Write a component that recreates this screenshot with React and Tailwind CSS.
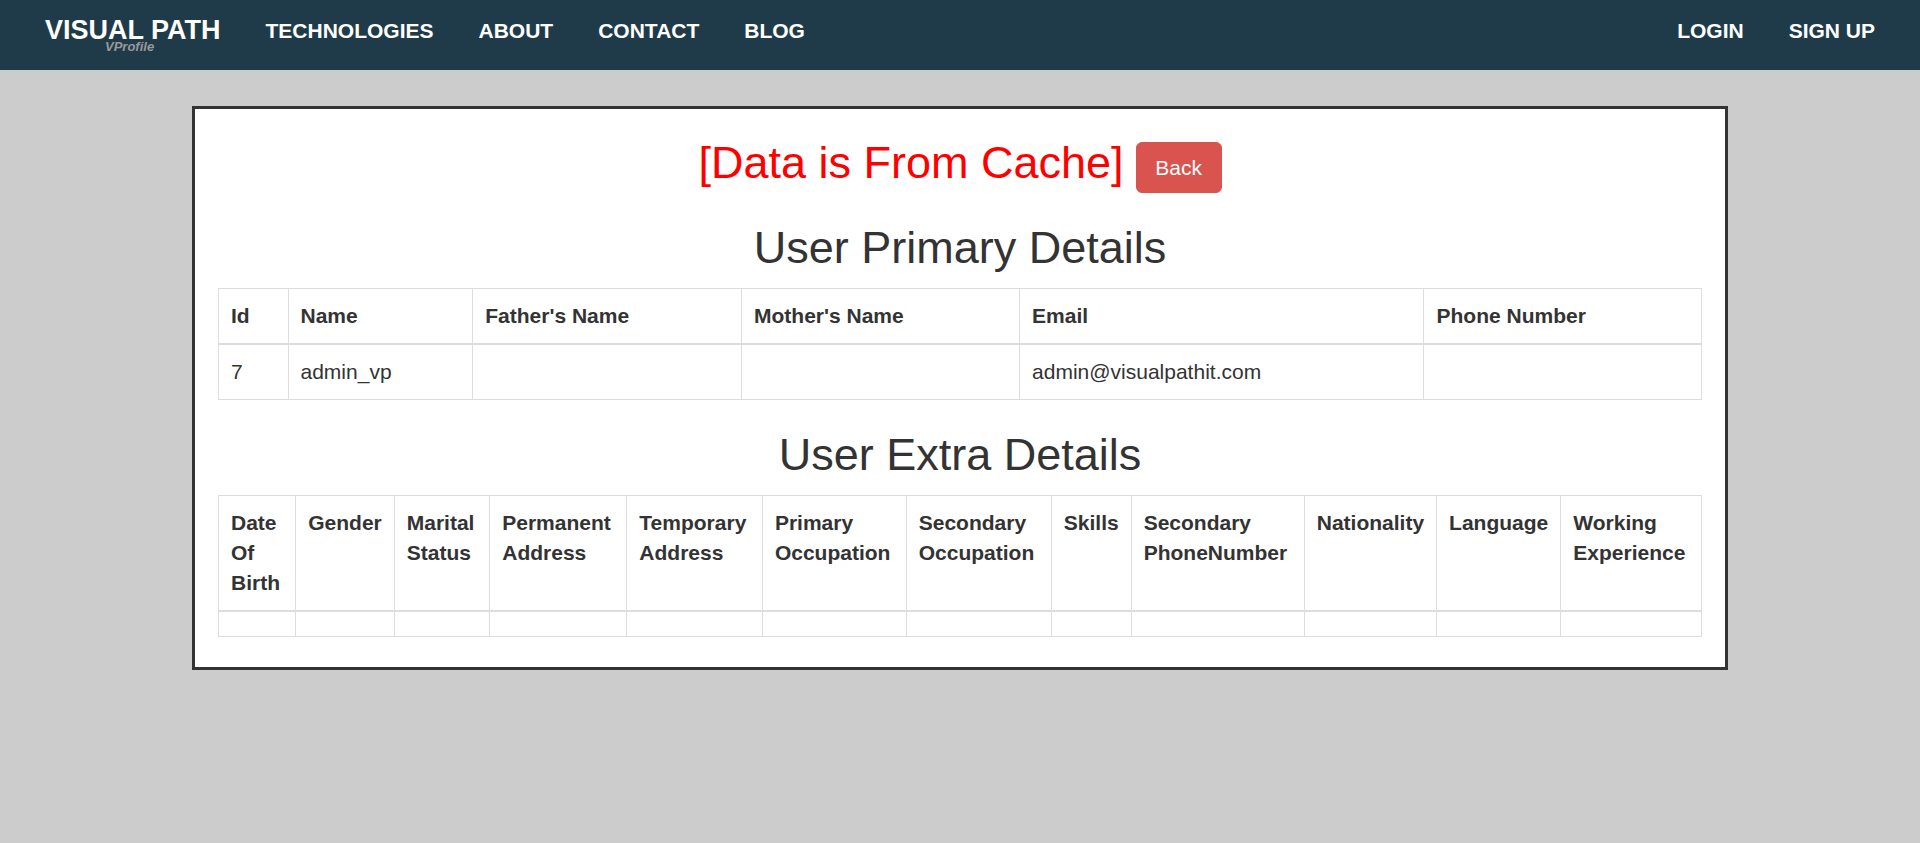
const primaryHead = ['Id', 'Name', "Father's Name", "Mother's Name", 'Email', 'Phone Number']
const primaryRow = ['7', 'admin_vp', '', '', 'admin@visualpathit.com', '']
const extraHead = [
  'Date Of Birth', 'Gender', 'Marital Status', 'Permanent Address', 'Temporary Address', 'Primary Occupation',
  'Secondary Occupation', 'Skills', 'Secondary PhoneNumber', 'Nationality', 'Language', 'Working Experience',
]

function DetailsTable({ head, row }) {
  return (
    <table className="w-full border-collapse border border-[#ddd] text-[21px] leading-[30px]">
      <thead>
        <tr>
          {head.map((h) => (
            <th key={h} className="border border-b-2 border-[#ddd] p-3 text-left align-top font-bold">{h}</th>
          ))}
        </tr>
      </thead>
      <tbody>
        <tr>
          {row.map((c, i) => (
            <td key={i} className="h-[25px] border border-[#ddd] p-3 align-top">{c}</td>
          ))}
        </tr>
      </tbody>
    </table>
  )
}

export default function App() {
  return (
    <div className="min-h-[843px] bg-[#ccc] font-['Liberation_Sans',Arial,sans-serif] text-[#333]">
      <nav className="flex h-[70px] items-center justify-between bg-[#1f3b49] px-[45px] pb-[9px] text-[21px] font-bold text-white">
        <div className="flex items-center gap-[45px]">
          <a className="relative text-[27px] leading-none">
            VISUAL PATH
            <span className="absolute left-[60px] top-[23px] text-[13px] italic text-[#999]">VProfile</span>
          </a>
          <a>TECHNOLOGIES</a>
          <a>ABOUT</a>
          <a>CONTACT</a>
          <a>BLOG</a>
        </div>
        <div className="flex items-center gap-[45px]">
          <a>LOGIN</a>
          <a>SIGN UP</a>
        </div>
      </nav>

      <div className="px-[192px] pt-9">
        <div className="border-[3px] border-[#333] bg-white px-[23px] pb-[30px]">
          <div className="flex items-start justify-center gap-3 pt-[29px] text-[45px] leading-[1.1] text-[#f00]">
            <span>[Data is From Cache]</span>
            <button className="mt-[4px] h-[51px] w-[86px] rounded-md border border-[#d9534f] bg-[#d9534f] text-[21px] text-white">Back</button>
          </div>
          <h2 className="mt-[30px] mb-[15px] text-center text-[45px] font-normal leading-[1.1]">User Primary Details</h2>
          <DetailsTable head={primaryHead} row={primaryRow} />
          <h2 className="mt-[30px] mb-[16px] text-center text-[45px] font-normal leading-[1.1]">User Extra Details</h2>
          <DetailsTable head={extraHead} row={extraHead.map(() => '')} />
        </div>
      </div>
    </div>
  )
}
